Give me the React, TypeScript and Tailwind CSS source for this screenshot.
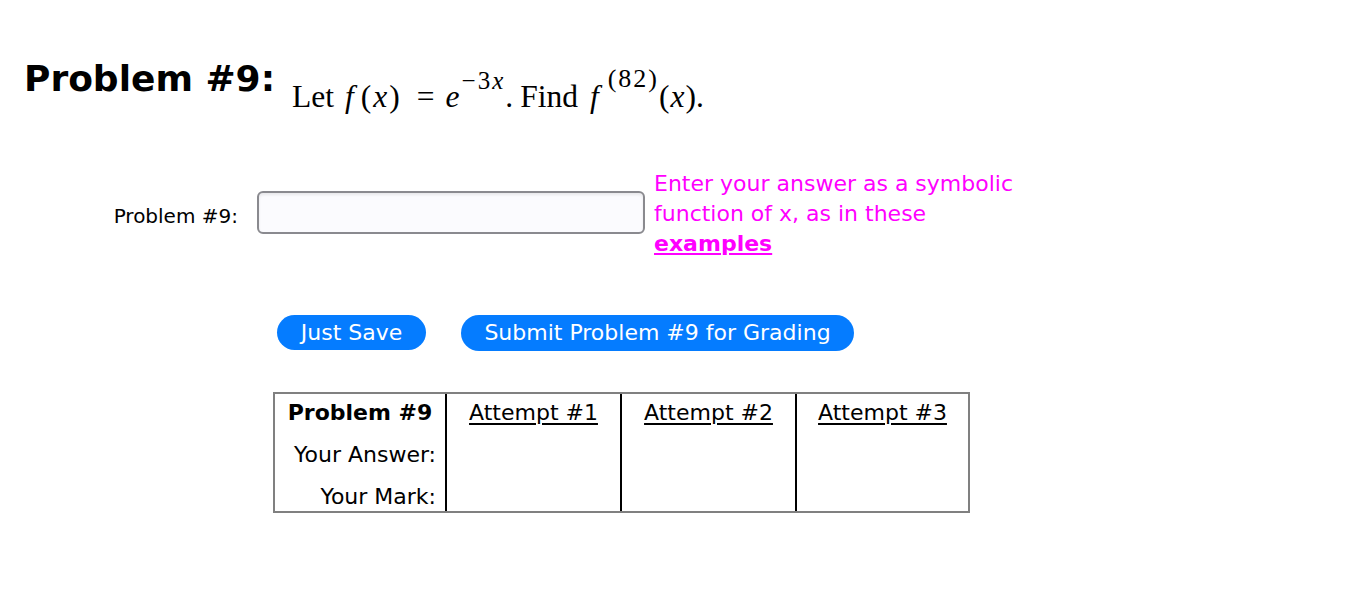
import React from "react";

const sans = "font-['DejaVu_Sans','Verdana',sans-serif]";

function MathLine() {
  return (
    <div className="mt-[20px] ml-[17px] font-['Liberation_Serif','Times_New_Roman',serif] text-[31.5px] leading-none text-black whitespace-nowrap">
      <span>Let</span>
      <i className="ml-[11px]">f</i>
      <span className="ml-[7px]">(</span>
      <i className="px-[2px]">x</i>
      <span>)</span>
      <span className="ml-[17px] mr-[11px]">=</span>
      <i>e</i>
      <sup className="ml-[2px] text-[25px] tracking-[2px] top-[-18px]">
        −3<i>x</i>
      </sup>
      <span>.</span>
      <span className="ml-[7px]">Find</span>
      <i className="ml-[12px]">f</i>
      <sup className="ml-[9px] text-[26px] tracking-[2px] top-[-20px]">(82)</sup>
      <span>(</span>
      <i className="px-[1px]">x</i>
      <span>).</span>
    </div>
  );
}

function AttemptsTable() {
  const rows = ["Your Answer:", "Your Mark:"];
  const attempts = ["Attempt #1", "Attempt #2", "Attempt #3"];
  return (
    <div className="ml-[273px] mt-[41px] flex h-[121px] w-[697px] overflow-hidden border-2 border-[#808080] text-[22px] text-black">
      <div className="w-[170px] flex flex-col">
        <div className="-mt-[2px] h-[42px] leading-[42px] text-center font-bold">Problem #9</div>
        {rows.map((r) => (
          <div key={r} className="h-[42px] leading-[42px] text-right pr-[9px]">
            {r}
          </div>
        ))}
      </div>
      {attempts.map((a, i) => (
        <div
          key={a}
          className={
            i === 2
              ? "flex-1 border-l-2 border-black"
              : "w-[175px] border-l-2 border-black"
          }
        >
          <div className="-mt-[2px] h-[42px] leading-[42px] text-center">
            <span className="underline underline-offset-[3px]">{a}</span>
          </div>
        </div>
      ))}
    </div>
  );
}

export default function App() {
  return (
    <div className={`${sans} min-h-[595px] w-full bg-white pt-[61px]`}>
      {/* heading + problem statement */}
      <div className="flex items-start pl-[24px] h-[52px]">
        <h2 className="text-[36px] font-bold leading-none text-black">Problem #9:</h2>
        <MathLine />
      </div>

      {/* answer entry row */}
      <div className="mt-[56px] flex items-center">
        <label className="mt-[4px] w-[238px] text-right text-[20px] text-black">Problem #9:</label>
        <input
          type="text"
          className="mb-[4px] ml-[19px] h-[43px] w-[388px] rounded-[6px] border-2 border-[#8a8a8f] bg-[#fbfbfe] shadow-[inset_0_2px_3px_rgba(0,0,0,0.08)] outline-none"
        />
        <div className="ml-[9px] w-[372px] text-[22px] leading-[30px] text-[#ff00ff]">
          Enter your answer as a symbolic function of x, as in these{" "}
          <a href="#" className="font-bold underline">
            examples
          </a>
        </div>
      </div>

      {/* buttons */}
      <div className="mt-[56px] flex pl-[277px]">
        <button className="h-[35px] w-[149px] rounded-full bg-[#057cff] text-[22px] leading-none text-white">
          Just Save
        </button>
        <button className="ml-[35px] h-[36px] w-[393px] rounded-full bg-[#057cff] text-[22px] leading-none text-white">
          Submit Problem #9 for Grading
        </button>
      </div>

      <AttemptsTable />
    </div>
  );
}
